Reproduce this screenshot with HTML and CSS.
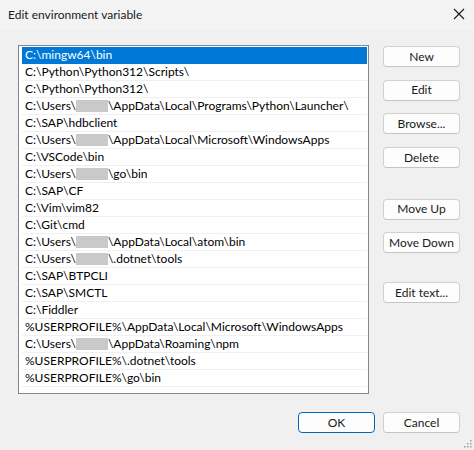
FILE: index.html
```html
<!DOCTYPE html>
<html>
<head>
<meta charset="utf-8">
<link rel="stylesheet" href="styles.css">
</head>
<body>
<div class="window">
  <div class="titlebar">
    <span class="title">Edit environment variable</span>
    <svg class="close" width="12" height="12" viewBox="0 0 12 12"><path d="M1 1 L11 11 M11 1 L1 11" stroke="#1a1a1a" stroke-width="1.1" fill="none"/></svg>
  </div>
  <div class="content">
    <div class="list">
      <div class="row selected">C:\mingw64\bin</div>
      <div class="row">C:\Python\Python312\Scripts\</div>
      <div class="row">C:\Python\Python312\</div>
      <div class="row">C:\Users\<span class="redact"></span>\AppData\Local\Programs\Python\Launcher\</div>
      <div class="row">C:\SAP\hdbclient</div>
      <div class="row">C:\Users\<span class="redact"></span>\AppData\Local\Microsoft\WindowsApps</div>
      <div class="row">C:\VSCode\bin</div>
      <div class="row">C:\Users\<span class="redact"></span>\go\bin</div>
      <div class="row">C:\SAP\CF</div>
      <div class="row">C:\Vim\vim82</div>
      <div class="row">C:\Git\cmd</div>
      <div class="row">C:\Users\<span class="redact"></span>\AppData\Local\atom\bin</div>
      <div class="row">C:\Users\<span class="redact"></span>\.dotnet\tools</div>
      <div class="row">C:\SAP\BTPCLI</div>
      <div class="row">C:\SAP\SMCTL</div>
      <div class="row">C:\Fiddler</div>
      <div class="row">%USERPROFILE%\AppData\Local\Microsoft\WindowsApps</div>
      <div class="row">C:\Users\<span class="redact"></span>\AppData\Roaming\npm</div>
      <div class="row">%USERPROFILE%\.dotnet\tools</div>
      <div class="row last">%USERPROFILE%\go\bin</div>
    </div>
    <div class="side">
      <button class="btn">New</button>
      <button class="btn">Edit</button>
      <button class="btn">Browse...</button>
      <button class="btn">Delete</button>
      <button class="btn up">Move Up</button>
      <button class="btn">Move Down</button>
      <button class="btn edittext">Edit text...</button>
    </div>
  </div>
  <div class="footer">
    <button class="btn ok">OK</button>
    <button class="btn">Cancel</button>
  </div>
  <svg class="grip" width="10" height="10" viewBox="0 0 10 10"><g fill="#a0a0a0"><rect x="7" y="1" width="1.5" height="1.5"/><rect x="4" y="4" width="1.5" height="1.5"/><rect x="7" y="4" width="1.5" height="1.5"/><rect x="1" y="7" width="1.5" height="1.5"/><rect x="4" y="7" width="1.5" height="1.5"/><rect x="7" y="7" width="1.5" height="1.5"/></g></svg>
</div>
</body>
</html>
```

FILE: styles.css
```css
* { box-sizing: border-box; }
html, body { margin: 0; padding: 0; background: #f0f0f0; }
.window {
  position: relative;
  width: 474px;
  height: 450px;
  background: #f0f0f0;
  font-family: Lato, "Noto Sans", sans-serif;
  font-size: 12px;
  color: #000;
  overflow: hidden;
}
.titlebar {
  height: 30px;
  display: flex;
  align-items: center;
  justify-content: space-between;
  padding: 0 9px 2px 8px;
  background: #f3f3f3;
}
.title { font-size: 12px; color: #1a1a1a; }
.content {
  display: flex;
  padding: 15px 0 0 18px;
}
.list {
  width: 351px;
  height: 349px;
  background: #fff;
  border: 1px solid #828790;
  padding: 1px 1px 0 3px;
}
.row {
  height: 17px;
  line-height: 16px;
  padding-left: 3px;
  border-bottom: 1px solid #f0f0f0;
  white-space: nowrap;
  overflow: hidden;
  color: #000;
}
.row.selected {
  background: #0078d7;
  color: #fff;
  border-bottom-color: #0078d7;
}
.redact {
  display: inline-block;
  width: 32px;
  height: 12px;
  background: #c9c9c9;
  vertical-align: -2px;
}
.side {
  display: flex;
  flex-direction: column;
  padding-left: 14px;
  padding-top: 1px;
}
.btn {
  width: 77px;
  height: 21px;
  background: #fdfdfd;
  border: 1px solid #d0d0d0;
  border-bottom-color: #c4c4c4;
  border-radius: 4px;
  font-family: Lato, "Noto Sans", sans-serif;
  font-size: 12px;
  color: #1a1a1a;
  padding: 0;
  line-height: 18px;
  margin-bottom: 12.7px;
}
.side .btn.up { margin-top: 18px; }
.side .btn.edittext { margin-top: 16px; }
.footer {
  display: flex;
  justify-content: flex-end;
  gap: 8px;
  padding: 18px 14px 0 0;
}
.footer .btn { margin: 0; }
.btn.ok { border: 1px solid #0067c0; box-shadow: inset 0 0 0 1px #fdfdfd; }
.grip { position: absolute; right: 1px; bottom: 1px; }
```
